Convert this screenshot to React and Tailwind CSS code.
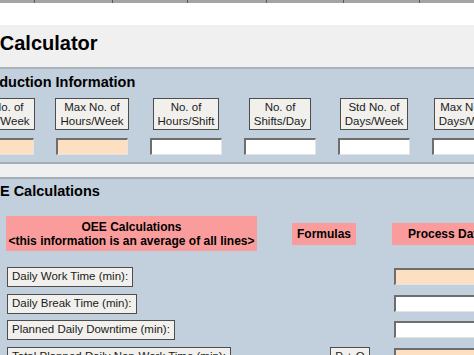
import React from "react";

const topCells = [35, 78, 75, 79, 77, 76];

const prodFields = [
    { label: ["Std No. of", "Hours/Week"], peach: true },
    { label: ["Max No. of", "Hours/Week"], peach: true },
    { label: ["No. of", "Hours/Shift"], peach: false },
    { label: ["No. of", "Shifts/Day"], peach: false },
    { label: ["Std No. of", "Days/Week"], peach: false },
    { label: ["Max No. of", "Days/Week"], peach: false },
];

const oeeRows = [
    { label: "Daily Work Time (min):", formula: null, peach: true },
    { label: "Daily Break Time (min):", formula: null, peach: false },
    { label: "Planned Daily Downtime (min):", formula: null, peach: false },
    { label: "Total Planned Daily Non-Work Time (min):", formula: "P + Q", peach: true },
];

function Cell({ peach, className = "" }) {
    return (
        <div
            className={
                "h-[17px] border-t-2 border-l-2 border-r border-b border-t-[#6e6e6e] border-l-[#6e6e6e] border-r-[#e4e4e4] border-b-[#e4e4e4] " +
                (peach ? "bg-[#fde0c2] " : "bg-white ") +
                className
            }
        />
    );
}

function Divider() {
    return (
        <div>
            <div className="h-[2px] bg-[#a4acb5]" />
            <div className="h-[13px] bg-[#f0f0f0]" />
            <div className="h-[2px] bg-[#a4acb5]" />
        </div>
    );
}

export default function App() {
    return (
        <div className="w-[474px] h-[355px] overflow-hidden bg-white font-['Liberation_Sans',Arial,sans-serif] text-[#1b1b1b]">
            {/* sheet tabs strip */}
            <div className="flex h-[3px] bg-[#a3a3a3]">
                {topCells.map((w, i) => (
                    <div key={i} style={{ width: w }} className="shrink-0 border-r border-[#5a5a5a]" />
                ))}
            </div>
            <div className="h-[22px] bg-white" />

            {/* title band */}
            <div className="h-[42px] bg-[#f0f0f0] pt-[7px] whitespace-nowrap">
                <h1 className="-ml-[48px] text-[20px] leading-[23px] font-bold text-black">OEE Calculator</h1>
            </div>
            <div className="h-[2px] bg-[#aab3bc]" />

            {/* production info */}
            <div className="bg-[#c2cfdc] pt-[5px] pb-[7px]">
                <h2 className="-ml-[25px] text-[14.5px] leading-[17px] font-bold text-black whitespace-nowrap">
                    Production Information
                </h2>
                <div className="mt-[7px] -ml-[38px] flex gap-[22px]">
                    {prodFields.map((f, i) => (
                        <div key={i} className="w-[72px] shrink-0 flex flex-col items-center gap-[8px]">
                            <div className="h-[32px] px-[4px] pt-[1px] border border-[#4d4d4d] bg-[#f1f0ed] text-[11.5px] leading-[14px] text-center whitespace-nowrap">
                                <div>{f.label[0]}</div>
                                <div>{f.label[1]}</div>
                            </div>
                            <Cell peach={f.peach} className="w-[72px]" />
                        </div>
                    ))}
                </div>
            </div>

            <Divider />

            {/* OEE calculations */}
            <div className="bg-[#c2cfdc] pt-[4px] h-full">
                <h2 className="-ml-[21px] text-[14.5px] leading-[17px] font-bold text-black whitespace-nowrap">
                    OEE Calculations
                </h2>

                <div className="mt-[16px] pl-[6px] grid grid-cols-[286px_100px_1fr] gap-y-[6.5px]">
                    <div className="flex items-center">
                        <div className="w-[251px] h-[35px] pt-[4px] bg-[#fb9c9c] text-[12px] leading-[14px] font-bold text-center text-black whitespace-nowrap">
                            <div>OEE Calculations</div>
                            <div>&lt;this information is an average of all lines&gt;</div>
                        </div>
                    </div>
                    <div className="flex items-center">
                        <div className="w-[64px] h-[22px] flex items-center justify-center bg-[#fb9c9c] text-[12px] font-bold text-black">
                            Formulas
                        </div>
                    </div>
                    <div className="flex items-center">
                        <div className="w-[120px] h-[22px] flex items-center pl-[16px] bg-[#fb9c9c] text-[12px] font-bold text-black whitespace-nowrap">
                            Process Data
                        </div>
                    </div>

                    <div className="col-span-3 h-[3px]" />

                    {oeeRows.map((r, i) => (
                        <React.Fragment key={i}>
                            <div className="flex items-start pl-[1px]">
                                <div className="h-[20px] px-[4px] flex items-center border border-[#4d4d4d] bg-[#f1f0ed] text-[11.5px] whitespace-nowrap">
                                    {r.label}
                                </div>
                            </div>
                            <div className="flex items-start">
                                {r.formula && (
                                    <div className="ml-[38px] w-[40px] h-[20px] flex items-center justify-center border border-[#4d4d4d] bg-[#f1f0ed] text-[11.5px] whitespace-nowrap">
                                        {r.formula}
                                    </div>
                                )}
                            </div>
                            <div className="pt-[1px] pl-[2px]">
                                <Cell peach={r.peach} className="w-[110px] h-[16px]" />
                            </div>
                        </React.Fragment>
                    ))}
                </div>
            </div>
        </div>
    );
}
